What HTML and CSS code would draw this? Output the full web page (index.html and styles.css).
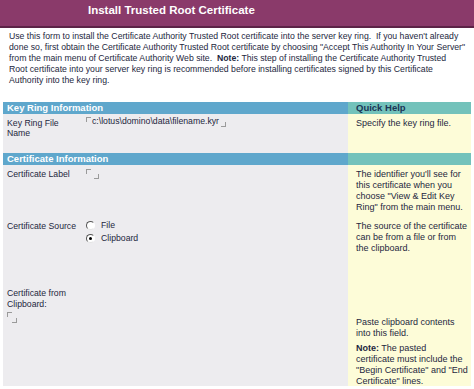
FILE: index.html
```html
<!DOCTYPE html>
<html>
<head>
<meta charset="utf-8">
<link rel="stylesheet" href="styles.css">
</head>
<body>
<div class="header"><span class="title">Install Trusted Root Certificate</span></div>
<div class="intro">Use this form to install the Certificate Authority Trusted Root certificate into the server key ring.&nbsp; If you haven't already<br>done so, first obtain the Certificate Authority Trusted Root certificate by choosing "Accept This Authority In Your Server"<br>from the main menu of Certificate Authority Web site.&nbsp; <b>Note:</b> This step of installing the Certificate Authority Trusted<br>Root certificate into your server key ring is recommended before installing certificates signed by this Certificate<br>Authority into the key ring.</div>
<div class="panel">
  <div class="bar">Key Ring Information</div>
  <div class="bar help-bar">Quick Help</div>

  <div class="cell label r1">Key Ring File Name</div>
  <div class="cell field r1"><span class="mk-l"></span>c:\lotus\domino\data\filename.kyr<span class="mk-r"></span></div>
  <div class="cell help r1">Specify the key ring file.</div>

  <div class="bar">Certificate Information</div>
  <div class="bar help-bar"></div>

  <div class="cell label r2">Certificate Label</div>
  <div class="cell field r2"><span class="mk-l"></span><span class="mk-r"></span></div>
  <div class="cell help r2">The identifier you'll see for<br>this certificate when you<br>choose "View &amp; Edit Key<br>Ring" from the main menu.</div>

  <div class="cell label r3">Certificate Source</div>
  <div class="cell field r3">
    <div class="radio"><span class="rb"></span>File</div>
    <div class="radio"><span class="rb on"></span>Clipboard</div>
  </div>
  <div class="cell help r3">The source of the certificate<br>can be from a file or from<br>the clipboard.</div>

  <div class="cell label r4">Certificate from Clipboard:<div class="marks"><span class="mk-l"></span><br><span class="mk-r"></span></div></div>
  <div class="cell field r4"></div>
  <div class="cell help r4"><p>Paste clipboard contents<br>into this field.</p><p><b>Note:</b> The pasted<br>certificate must include the<br>"Begin Certificate" and "End<br>Certificate" lines.</p></div>
</div>
</body>
</html>
```
FILE: styles.css
```css
html, body { margin: 0; padding: 0; background: #ffffff; }
body { font-family: "Liberation Sans", Arial, sans-serif; font-size: 8.7px; line-height: 11px; color: #1d2740; width: 474px; height: 389px; overflow: hidden; }
.header { background: #8a3a6a; height: 26px; border-bottom: 2px solid #5c2347; }
.title { display: block; padding-left: 88px; font-size: 11.5px; font-weight: bold; color: #ffffff; line-height: 21px; }
.intro { padding: 3px 4px 0 9px; height: 71px; white-space: nowrap; }
.panel { margin: 0 3px; display: grid; grid-template-columns: 83px 262px 123px; }
.bar { grid-column: 1 / 3; background: #5fa7cc; color: #ffffff; font-weight: bold; font-size: 9.5px; height: 12px; line-height: 12px; padding-left: 4px; }
.help-bar { grid-column: 3; background: #73c2bb; color: #1b3556; padding-left: 8px; }
.cell { background: #edecef; padding: 4px 2px 0 4px; box-sizing: border-box; }
.help { background: #fdfcd8; padding: 4px 0 0 8px; white-space: nowrap; font-size: 9px; }
.field { padding-left: 0; padding-top: 0; }
.r1 { height: 39px; }
.r2 { height: 52px; }
.r3 { height: 67px; }
.r4 { height: 102px; }
.help p { margin: 0 0 4px 0; }
.r4.help { padding-top: 33px; }
.r1.label { line-height: 10px; padding-top: 4px; }
.mk-l, .mk-r { display: inline-block; width: 4px; height: 4px; }
.mk-l { border-left: 1px solid #9a9a9a; border-top: 1px solid #9a9a9a; margin-right: 1px; vertical-align: top; margin-top: 1px; }
.mk-r { border-right: 1px solid #9a9a9a; border-bottom: 1px solid #9a9a9a; margin-left: 2px; vertical-align: bottom; margin-bottom: 0; }
.r1.field { padding-top: 2px; }
.r2.field { padding-top: 3px; }
.marks { line-height: 4px; margin-top: 2px; }
.marks .mk-l { margin-top: 0; }
.marks .mk-r { margin-left: 5px; margin-top: 1px; }
.radio { display: flex; align-items: center; height: 13px; }
.r3.field { padding-top: 2px; }
.rb { width: 7px; height: 7px; border-radius: 50%; border: 1px solid #555; border-right-color: #fff; border-bottom-color: #e4e4e4; background: #fff; margin-right: 6px; position: relative; }
.rb.on::after { content: ""; position: absolute; left: 2px; top: 2px; width: 3px; height: 3px; border-radius: 50%; background: #000; }
```
